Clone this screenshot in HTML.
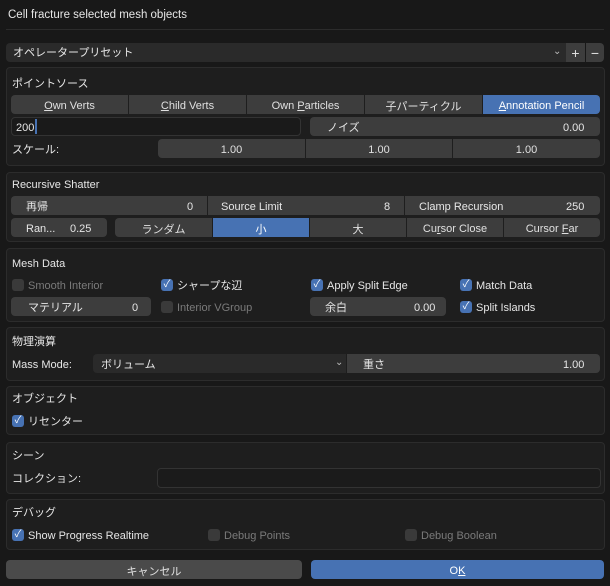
<!DOCTYPE html>
<html><head><meta charset="utf-8"><style>
*{box-sizing:border-box;margin:0;padding:0}
body{width:610px;height:586px;background:#181818;font-family:"Liberation Sans","Noto Sans CJK JP",sans-serif;font-size:11px;color:#e6e6e6;position:relative;overflow:hidden}
.a{position:absolute}
.t{position:absolute;white-space:nowrap;line-height:14px}
.p{position:absolute;left:6px;width:599px;background:#1e1e1e;border:1px solid #2c2c2c;border-radius:4px}
.b{position:absolute;background:#3d3d3d;height:19px;display:flex;align-items:center;justify-content:center;padding-top:2px;color:#e0e0e0;white-space:nowrap;overflow:hidden}
.bl{background:#4772b3;color:#fff}
.cb{position:absolute;width:12px;height:12px;border-radius:3px;background:#4772b3;color:#fff;font-size:10px;line-height:12px;text-align:center}
.cb.off{background:#3a3a3a}
.dim{color:#7a7a7a}
u{text-decoration:underline}
</style></head><body>
<div class="t" style="left:8px;top:8px;font-size:11.5px">Cell fracture selected mesh objects</div>
<div class="a" style="left:6px;top:29px;width:598px;height:1px;background:#2c2c2c"></div>

<div class="a" style="left:6px;top:43px;width:560px;height:19px;background:#2a2a2a;border-radius:4px 0 0 4px"></div>
<div class="t" style="left:13px;top:46px">オペレータープリセット</div>
<div class="t" style="left:553px;top:45px;color:#bbb;font-size:10px">⌄</div>
<div class="b" style="left:566px;top:43px;width:19px;font-size:14px;padding-top:0">+</div>
<div class="b" style="left:586px;top:43px;width:18px;border-radius:0 4px 4px 0;font-size:14px;padding-top:0">−</div>

<div class="p" style="top:67px;height:99px"></div>
<div class="t" style="left:12px;top:77px">ポイントソース</div>
<div class="b" style="left:11px;top:95px;width:117px;border-radius:4px 0 0 4px"><span><u>O</u>wn Verts</span></div>
<div class="b" style="left:129px;top:95px;width:117px"><span><u>C</u>hild Verts</span></div>
<div class="b" style="left:247px;top:95px;width:117px"><span>Own <u>P</u>articles</span></div>
<div class="b" style="left:365px;top:95px;width:117px">子パーティクル</div>
<div class="b bl" style="left:483px;top:95px;width:117px;border-radius:0 4px 4px 0"><span><u>A</u>nnotation Pencil</span></div>
<div class="a" style="left:11px;top:117px;width:290px;height:19px;background:#1a1a1a;border:1px solid #333;border-radius:4px"></div>
<div class="t" style="left:16px;top:121px">200</div>
<div class="a" style="left:35px;top:119px;width:2px;height:15px;background:#4772b3"></div>
<div class="b" style="left:310px;top:117px;width:290px;border-radius:4px"></div>
<div class="t" style="left:327px;top:121px">ノイズ</div>
<div class="t" style="left:563px;top:121px">0.00</div>
<div class="t" style="left:12px;top:143px">スケール:</div>
<div class="b" style="left:158px;top:139px;width:147px;border-radius:4px 0 0 4px">1.00</div>
<div class="b" style="left:306px;top:139px;width:146px">1.00</div>
<div class="b" style="left:453px;top:139px;width:147px;border-radius:0 4px 4px 0">1.00</div>

<div class="p" style="top:172px;height:70px"></div>
<div class="t" style="left:12px;top:178px">Recursive Shatter</div>
<div class="b" style="left:11px;top:196px;width:196px;border-radius:4px 0 0 4px"></div>
<div class="t" style="left:26px;top:200px">再帰</div><div class="t" style="left:187px;top:200px">0</div>
<div class="b" style="left:208px;top:196px;width:196px"></div>
<div class="t" style="left:221px;top:200px">Source Limit</div><div class="t" style="left:384px;top:200px">8</div>
<div class="b" style="left:405px;top:196px;width:195px;border-radius:0 4px 4px 0"></div>
<div class="t" style="left:419px;top:200px">Clamp Recursion</div><div class="t" style="left:566px;top:200px">250</div>
<div class="b" style="left:11px;top:218px;width:96px;border-radius:4px"></div>
<div class="t" style="left:26px;top:222px">Ran...</div><div class="t" style="left:70px;top:222px">0.25</div>
<div class="b" style="left:115px;top:218px;width:97px;border-radius:4px 0 0 4px">ランダム</div>
<div class="b bl" style="left:213px;top:218px;width:96px">小</div>
<div class="b" style="left:310px;top:218px;width:96px">大</div>
<div class="b" style="left:407px;top:218px;width:96px"><span>Cu<u>r</u>sor Close</span></div>
<div class="b" style="left:504px;top:218px;width:96px;border-radius:0 4px 4px 0"><span>Cursor <u>F</u>ar</span></div>

<div class="p" style="top:248px;height:74px"></div>
<div class="t" style="left:12px;top:257px">Mesh Data</div>
<div class="cb off" style="left:12px;top:279px"></div><div class="t dim" style="left:28px;top:279px">Smooth Interior</div>
<div class="cb" style="left:161px;top:279px">✓</div><div class="t" style="left:177px;top:279px">シャープな辺</div>
<div class="cb" style="left:311px;top:279px">✓</div><div class="t" style="left:327px;top:279px">Apply Split Edge</div>
<div class="cb" style="left:460px;top:279px">✓</div><div class="t" style="left:476px;top:279px">Match Data</div>
<div class="b" style="left:11px;top:297px;width:140px;border-radius:4px"></div>
<div class="t" style="left:28px;top:301px">マテリアル</div><div class="t" style="left:132px;top:301px">0</div>
<div class="cb off" style="left:161px;top:301px"></div><div class="t dim" style="left:177px;top:301px">Interior VGroup</div>
<div class="b" style="left:310px;top:297px;width:136px;border-radius:4px"></div>
<div class="t" style="left:325px;top:301px">余白</div><div class="t" style="left:414px;top:301px">0.00</div>
<div class="cb" style="left:460px;top:301px">✓</div><div class="t" style="left:476px;top:301px">Split Islands</div>

<div class="p" style="top:327px;height:54px"></div>
<div class="t" style="left:12px;top:335px">物理演算</div>
<div class="t" style="left:12px;top:358px">Mass Mode:</div>
<div class="a" style="left:93px;top:354px;width:253px;height:19px;background:#2a2a2a;border-radius:4px 0 0 4px"></div>
<div class="t" style="left:101px;top:358px">ボリューム</div>
<div class="t" style="left:335px;top:356px;font-size:10px;color:#bbb">⌄</div>
<div class="b" style="left:347px;top:354px;width:253px;border-radius:0 4px 4px 0"></div>
<div class="t" style="left:363px;top:358px">重さ</div><div class="t" style="left:563px;top:358px">1.00</div>

<div class="p" style="top:386px;height:49px"></div>
<div class="t" style="left:12px;top:392px">オブジェクト</div>
<div class="cb" style="left:12px;top:415px">✓</div><div class="t" style="left:28px;top:415px">リセンター</div>

<div class="p" style="top:442px;height:52px"></div>
<div class="t" style="left:12px;top:449px">シーン</div>
<div class="t" style="left:12px;top:472px">コレクション:</div>
<div class="a" style="left:157px;top:468px;width:444px;height:20px;background:#1b1b1b;border:1px solid #333;border-radius:4px"></div>

<div class="p" style="top:499px;height:51px"></div>
<div class="t" style="left:12px;top:506px">デバッグ</div>
<div class="cb" style="left:12px;top:529px">✓</div><div class="t" style="left:28px;top:529px">Show Progress Realtime</div>
<div class="cb off" style="left:208px;top:529px"></div><div class="t dim" style="left:224px;top:529px">Debug Points</div>
<div class="cb off" style="left:405px;top:529px"></div><div class="t dim" style="left:421px;top:529px">Debug Boolean</div>

<div class="b" style="left:6px;top:560px;width:296px;border-radius:4px;background:#4a4a4a">キャンセル</div>
<div class="b bl" style="left:311px;top:560px;width:293px;border-radius:4px"><span>O<u>K</u></span></div>
</body></html>
